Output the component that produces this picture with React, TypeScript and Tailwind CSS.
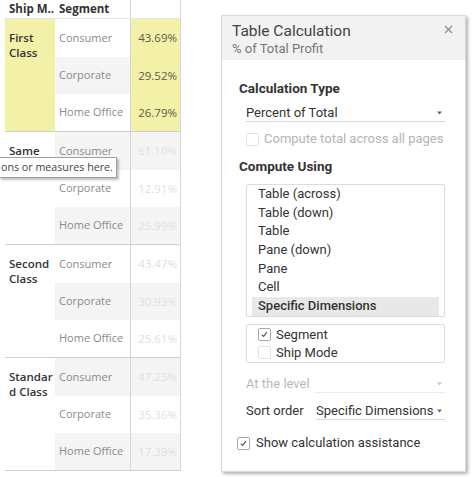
import React from 'react';

type Row = { seg: string; val: string };
type Group = { mode: string[]; rows: Row[]; hot?: boolean };

const groups: Group[] = [
  { mode: ['First', 'Class'], hot: true, rows: [
    { seg: 'Consumer', val: '43.69%' },
    { seg: 'Corporate', val: '29.52%' },
    { seg: 'Home Office', val: '26.79%' },
  ] },
  { mode: ['Same'], rows: [
    { seg: 'Consumer', val: '61.10%' },
    { seg: 'Corporate', val: '12.91%' },
    { seg: 'Home Office', val: '25.99%' },
  ] },
  { mode: ['Second', 'Class'], rows: [
    { seg: 'Consumer', val: '43.47%' },
    { seg: 'Corporate', val: '30.93%' },
    { seg: 'Home Office', val: '25.61%' },
  ] },
  { mode: ['Standar', 'd Class'], rows: [
    { seg: 'Consumer', val: '47.25%' },
    { seg: 'Corporate', val: '35.36%' },
    { seg: 'Home Office', val: '17.39%' },
  ] },
];

const rowHeights = ['h-[38px]', 'h-[37px]', 'h-[37px]'];

const Check: React.FC<{ on?: boolean; dim?: boolean }> = ({ on, dim }) => (
  <span className={`flex h-[13px] w-[13px] shrink-0 items-center justify-center rounded-[2px] border bg-white ${dim ? 'border-[#e2e2e2]' : 'border-[#a8a8a8]'}`}>
    {on && (
      <svg width="9" height="9" viewBox="0 0 9 9">
        <path d="M1.8 4.6 L3.6 6.4 L7 2.2" fill="none" stroke="#555" strokeWidth="1.1" />
      </svg>
    )}
  </span>
);

const Caret: React.FC<{ dim?: boolean }> = ({ dim }) => (
  <svg width="5" height="4" viewBox="0 0 5 4" className="shrink-0">
    <path d="M0 0.5 L5 0.5 L2.5 3.5 Z" fill={dim ? '#c8c8c8' : '#666'} />
  </svg>
);

function DataTable() {
  let band = 0;
  return (
    <div className="relative ml-[5px] w-[176px] font-['Open_Sans',sans-serif] text-[11px]">
      <div className="flex h-[19px] border-b border-[#e4e4e4] text-[11.5px] font-bold text-[#333]">
        <div className="w-[50px] whitespace-nowrap pl-[4px] leading-[18px]">Ship M..</div>
        <div className="w-[75px] pl-[4px] leading-[18px]">Segment</div>
        <div className="w-[51px] border-x border-[#d6d6d6]"></div>
      </div>
      {groups.map((g, gi) => (
        <div key={gi} className="flex border-b border-[#d0d0d0]">
          <div className={`w-[50px] pl-[4px] pt-[11px] text-[11.5px] font-semibold leading-[15px] text-[#333] ${g.hot ? 'bg-[#f3f0a8]' : 'bg-white'}`}>
            {g.mode.map(m => <div key={m} className="whitespace-nowrap">{m}</div>)}
          </div>
          <div className="flex flex-1 flex-col">
            {g.rows.map((r, ri) => {
              const gray = band++ % 2 === 1;
              return (
                <div key={ri} className={`flex items-center ${rowHeights[ri]}`}>
                  <div className={`flex h-full w-[75px] items-center whitespace-nowrap pl-[4px] text-[#8a8a8a] ${gray ? 'bg-[#f4f4f4]' : 'bg-white'}`}>{r.seg}</div>
                  <div className={`flex h-full w-[51px] items-center justify-end border-x border-[#d6d6d6] pr-[3px] text-[11.5px] ${g.hot ? 'bg-[#f3f0a8] text-[#5c5c4a]' : gray ? 'bg-[#f4f4f4] text-[#e0e0e0]' : 'bg-white text-[#e0e0e0]'}`}>{r.val}</div>
                </div>
              );
            })}
          </div>
        </div>
      ))}
      <div className="absolute left-[-6px] top-[157px] h-[21px] whitespace-nowrap border border-[#a0a0a0] bg-white pl-[1px] pr-[3px] text-[10.7px] leading-[19px] text-[#444] shadow-[2px_2px_2px_rgba(0,0,0,0.25)]">
        ons or measures here.
      </div>
    </div>
  );
}

function CalcPanel() {
  const items = ['Table (across)', 'Table (down)', 'Table', 'Pane (down)', 'Pane', 'Cell'];
  return (
    <div className="ml-[40px] mt-[15px] flex h-[457px] w-[245px] flex-col whitespace-nowrap border border-[#dadada] bg-white font-['Roboto',sans-serif] text-[13px] text-[#333] shadow-[2px_2px_3px_rgba(0,0,0,0.3)]">
      <div className="flex h-[44px] justify-between bg-[#f2f2f2] pl-[10px] pr-[12px] pt-[5px]">
        <div>
          <div className="text-[15.5px] leading-[20px] text-[#444]">Table Calculation</div>
          <div className="text-[13px] leading-[16px] text-[#777]">% of Total Profit</div>
        </div>
        <svg width="9" height="9" viewBox="0 0 9 9" className="mt-[4px]">
          <path d="M1 1 L8 8 M8 1 L1 8" stroke="#888" strokeWidth="1.1" />
        </svg>
      </div>
      <div className="flex flex-col pl-[17px] pr-[20px]">
        <div className="mt-[19px] text-[13.5px] font-bold leading-[18px]">Calculation Type</div>
        <div className="ml-[7px] mt-[7px] flex h-[18px] items-center justify-between border-b border-[#d8d8d8] pr-[3px]">
          <span className="leading-[17px]">Percent of Total</span>
          <Caret />
        </div>
        <div className="ml-[7px] mt-[10px] flex h-[14px] items-center gap-[5px] text-[#b4b4b4]">
          <Check dim />
          <span>Compute total across all pages</span>
        </div>
        <div className="mt-[11px] text-[13.5px] font-bold leading-[18px]">Compute Using</div>
        <div className="ml-[7px] mt-[9px] flex h-[133px] flex-col rounded-[2px] border border-[#dcdcdc] px-[5px]">
          {items.map(t => (
            <div key={t} className="h-[18.7px] pl-[6px] leading-[18.7px]">{t}</div>
          ))}
          <div className="h-[18.7px] bg-[#e8e8e8] pl-[6px] font-medium leading-[18.7px]">Specific Dimensions</div>
        </div>
        <div className="ml-[7px] mt-[7px] flex h-[39px] flex-col justify-center rounded-[2px] border border-[#dcdcdc] pl-[11px]">
          <div className="flex h-[18.5px] items-center gap-[5px]"><Check on /><span>Segment</span></div>
          <div className="flex h-[18.5px] items-center gap-[5px]"><Check dim /><span>Ship Mode</span></div>
        </div>
        <div className="ml-[7px] mt-[12px] flex h-[18px] items-center text-[#b8b8b8]">
          <span className="w-[69px]">At the level</span>
          <div className="flex h-full flex-1 items-center justify-end border-b border-[#ececec] pr-[3px]">
            <Caret dim />
          </div>
        </div>
        <div className="ml-[7px] mt-[9px] flex h-[18px] items-center">
          <span className="w-[70px]">Sort order</span>
          <div className="flex h-full flex-1 items-center justify-between border-b border-[#d8d8d8] pr-[3px]">
            <span>Specific Dimensions</span>
            <Caret />
          </div>
        </div>
        <div className="ml-[-2px] mt-[16px] flex h-[14px] items-center gap-[6px]">
          <Check on />
          <span>Show calculation assistance</span>
        </div>
      </div>
    </div>
  );
}

export default function App() {
  return (
    <div className="flex h-[477px] w-[474px] overflow-hidden bg-white">
      <DataTable />
      <CalcPanel />
    </div>
  );
}
